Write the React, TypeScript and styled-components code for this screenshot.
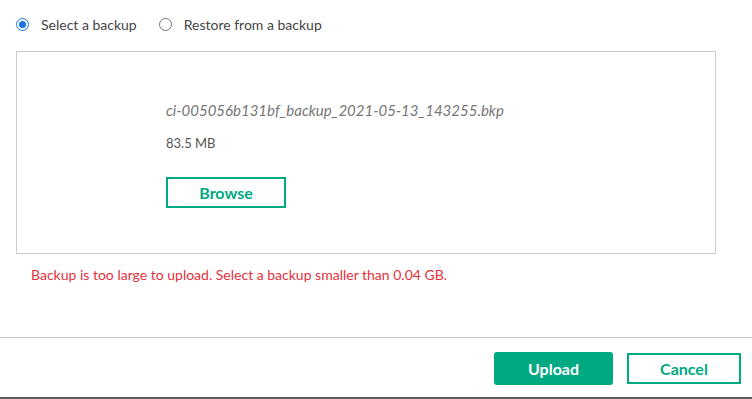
import React from "react";
import styled, { createGlobalStyle } from "styled-components";

const Global = createGlobalStyle`
  html, body { margin: 0; padding: 0; background: #ffffff; }
  body { font-family: Lato, "Liberation Sans", Arial, sans-serif; color: #444; }
  * { box-sizing: border-box; }
`;

const GREEN = "#01a982";

const Page = styled.div`
  width: 752px;
  height: 399px;
  display: flex;
  flex-direction: column;
  overflow: hidden;
`;

const RadioRow = styled.div`
  display: flex;
  align-items: center;
  gap: 22px;
  height: 24px;
  margin: 12px 0 0 16px;
`;

const RadioLabel = styled.label`
  display: flex;
  align-items: center;
  gap: 12px;
  font-size: 14px;
  color: #444;
  cursor: pointer;
`;

const RadioCircle = styled.span<{ $checked?: boolean }>`
  width: 13px;
  height: 13px;
  border-radius: 50%;
  border: 1px solid ${(p) => (p.$checked ? "#1a73e8" : "#767676")};
  display: inline-flex;
  align-items: center;
  justify-content: center;
  &::after {
    content: "";
    width: 7px;
    height: 7px;
    border-radius: 50%;
    background: ${(p) => (p.$checked ? "#1a73e8" : "transparent")};
  }
`;

const DropBox = styled.div`
  margin: 15px 0 0 16px;
  width: 700px;
  height: 203px;
  border: 1px solid #cccccc;
  padding: 48px 0 0 149px;
  display: flex;
  flex-direction: column;
  align-items: flex-start;
`;

const FileName = styled.div`
  font-size: 15px;
  font-style: italic;
  color: #767676;
  line-height: 20px;
`;

const FileSize = styled.div`
  margin-top: 15px;
  font-size: 13px;
  color: #555;
  line-height: 16px;
`;

const OutlineButton = styled.button<{ $w: number; $h: number }>`
  width: ${(p) => p.$w}px;
  height: ${(p) => p.$h}px;
  border: 2px solid ${GREEN};
  background: #fff;
  color: ${GREEN};
  font-family: Lato, "Liberation Sans", Arial, sans-serif;
  font-weight: 700;
  font-size: 16px;
  padding: 0;
  border-radius: 0;
`;

const BrowseButton = styled(OutlineButton)`
  margin-top: 26px;
`;

const ErrorText = styled.div`
  margin: 12px 0 0 31px;
  font-size: 14px;
  color: #e5303e;
  line-height: 18px;
`;

const Spacer = styled.div`
  flex: 1;
`;

const Footer = styled.div`
  border-top: 1px solid #c6c6c6;
  border-bottom: 2px solid #5a5a5a;
  height: 62px;
  display: flex;
  justify-content: flex-end;
  align-items: flex-start;
  gap: 14px;
  padding: 14px 11px 0 0;
`;

const PrimaryButton = styled.button`
  width: 119px;
  height: 33px;
  border: none;
  border-radius: 3px;
  background: ${GREEN};
  color: #fff;
  font-family: Lato, "Liberation Sans", Arial, sans-serif;
  font-weight: 700;
  font-size: 16px;
  padding: 0;
`;

const CancelButton = styled(OutlineButton)`
  margin-top: 1px;
`;

export default function App() {
  return (
    <Page>
      <Global />
      <RadioRow>
        <RadioLabel>
          <RadioCircle $checked />
          Select a backup
        </RadioLabel>
        <RadioLabel>
          <RadioCircle />
          Restore from a backup
        </RadioLabel>
      </RadioRow>
      <DropBox>
        <FileName>ci-005056b131bf_backup_2021-05-13_143255.bkp</FileName>
        <FileSize>83.5 MB</FileSize>
        <BrowseButton $w={120} $h={31}>Browse</BrowseButton>
      </DropBox>
      <ErrorText>Backup is too large to upload. Select a backup smaller than 0.04 GB.</ErrorText>
      <Spacer />
      <Footer>
        <PrimaryButton>Upload</PrimaryButton>
        <CancelButton $w={114} $h={31}>Cancel</CancelButton>
      </Footer>
    </Page>
  );
}
